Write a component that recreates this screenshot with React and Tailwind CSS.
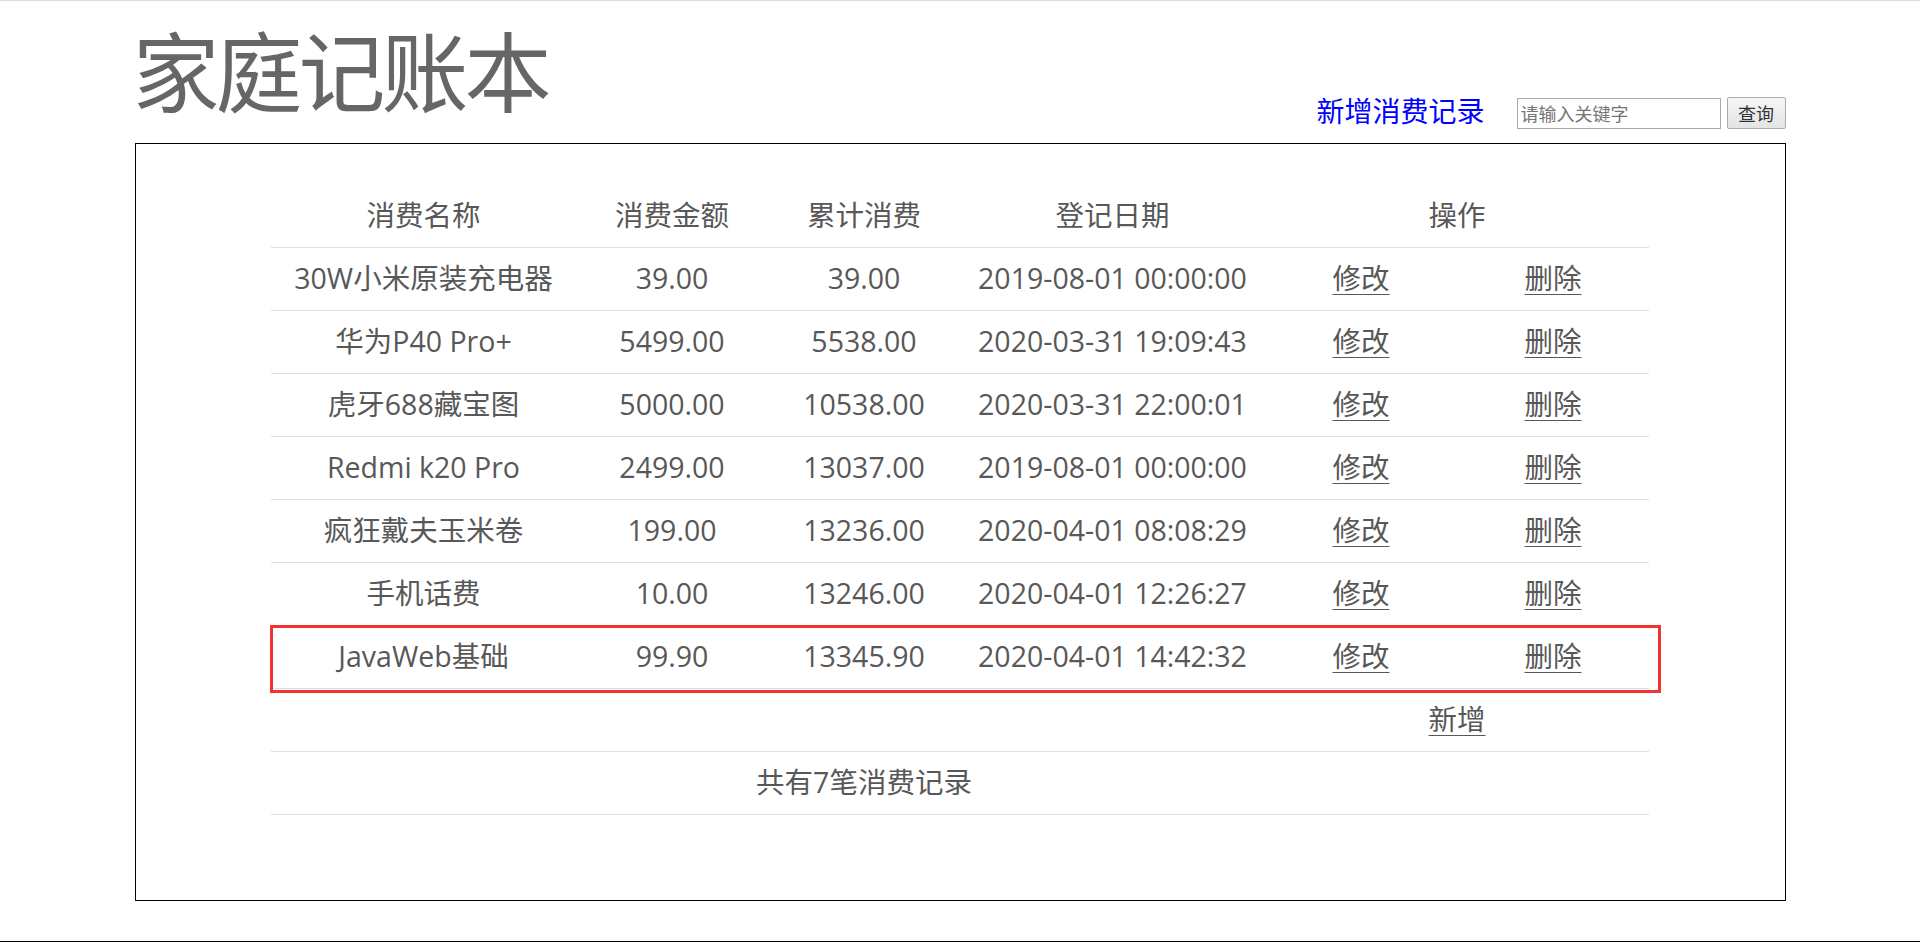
import React from "react";

const rows = [
  ["30W小米原装充电器", "39.00", "39.00", "2019-08-01 00:00:00"],
  ["华为P40 Pro+", "5499.00", "5538.00", "2020-03-31 19:09:43"],
  ["虎牙688藏宝图", "5000.00", "10538.00", "2020-03-31 22:00:01"],
  ["Redmi k20 Pro", "2499.00", "13037.00", "2019-08-01 00:00:00"],
  ["疯狂戴夫玉米卷", "199.00", "13236.00", "2020-04-01 08:08:29"],
  ["手机话费", "10.00", "13246.00", "2020-04-01 12:26:27"],
  ["JavaWeb基础", "99.90", "13345.90", "2020-04-01 14:42:32"],
];

const FONT = { fontFamily: '"Open Sans", "Noto Sans CJK SC", sans-serif' };

export default function App() {
  return (
    <div
      className="h-[942px] bg-white border-t border-t-[#dcdcdc] border-b border-b-black overflow-hidden"
      style={FONT}
    >
      <div className="w-[1651px] mx-auto">
        <div className="flex items-end justify-between h-[142px]">
          <h1
            className="self-start mt-[24px] ml-[-2px] text-[87px] leading-none text-[#666] font-normal tracking-[-4px]"
            style={{ fontFamily: '"Noto Sans CJK SC", sans-serif' }}
          >
            家庭记账本
          </h1>
          <div className="flex items-center mb-[14px]">
            <a className="text-[28px] leading-none text-[#0000ff] mr-[32px] mb-[4px]" href="#">
              新增消费记录
            </a>
            <input
              className="w-[204px] h-[31px] border border-[#a9a9a9] px-[3px] text-[18px] text-[#333] placeholder:text-[#757575] outline-none"
              placeholder="请输入关键字"
              style={{ fontFamily: '"Noto Sans CJK SC", sans-serif' }}
            />
            <button
              className="ml-[6px] w-[59px] h-[32px] border border-[#acacac] rounded-[2px] bg-gradient-to-b from-[#f6f6f6] to-[#e4e4e4] text-[18px] text-[#333] leading-none"
              style={{ fontFamily: '"Noto Sans CJK SC", sans-serif' }}
            >
              查询
            </button>
          </div>
        </div>
        <div className="h-[758px] border border-black">
          <div className="relative w-[1378px] mx-auto mt-[40px]">
            <table className="w-[1378px] table-fixed border-collapse text-[28.5px] text-[#585858]">
              <colgroup>
                <col className="w-[305px]" />
                <col className="w-[192px]" />
                <col className="w-[192px]" />
                <col className="w-[305px]" />
                <col className="w-[192px]" />
                <col className="w-[192px]" />
              </colgroup>
              <thead>
                <tr className="border-b border-[#dedede]">
                  <th className="h-[63px] font-normal text-center">消费名称</th>
                  <th className="font-normal text-center">消费金额</th>
                  <th className="font-normal text-center">累计消费</th>
                  <th className="font-normal text-center">登记日期</th>
                  <th className="font-normal text-center" colSpan={2}>
                    操作
                  </th>
                </tr>
              </thead>
              <tbody>
                {rows.map((r, i) => (
                  <tr key={i} className="border-b border-[#dedede]">
                    <td className="h-[63px] text-center whitespace-nowrap">{r[0]}</td>
                    <td className="text-center">{r[1]}</td>
                    <td className="text-center">{r[2]}</td>
                    <td className="text-center whitespace-nowrap">{r[3]}</td>
                    <td className="text-center">
                      <a href="#" className="underline underline-offset-[5px] decoration-1">
                        修改
                      </a>
                    </td>
                    <td className="text-center">
                      <a href="#" className="underline underline-offset-[5px] decoration-1">
                        删除
                      </a>
                    </td>
                  </tr>
                ))}
                <tr className="border-b border-[#dedede]">
                  <td className="h-[63px]" colSpan={4}></td>
                  <td className="text-center" colSpan={2}>
                    <a href="#" className="underline underline-offset-[5px] decoration-1">
                      新增
                    </a>
                  </td>
                </tr>
                <tr className="border-b border-[#dedede]">
                  <td className="h-[63px] text-center" colSpan={5}>
                    共有7笔消费记录
                  </td>
                  <td></td>
                </tr>
              </tbody>
            </table>
            <div className="absolute left-[-1px] top-[441px] w-[1391px] h-[68px] border-[3px] border-[#f33333] pointer-events-none" />
          </div>
        </div>
      </div>
    </div>
  );
}
